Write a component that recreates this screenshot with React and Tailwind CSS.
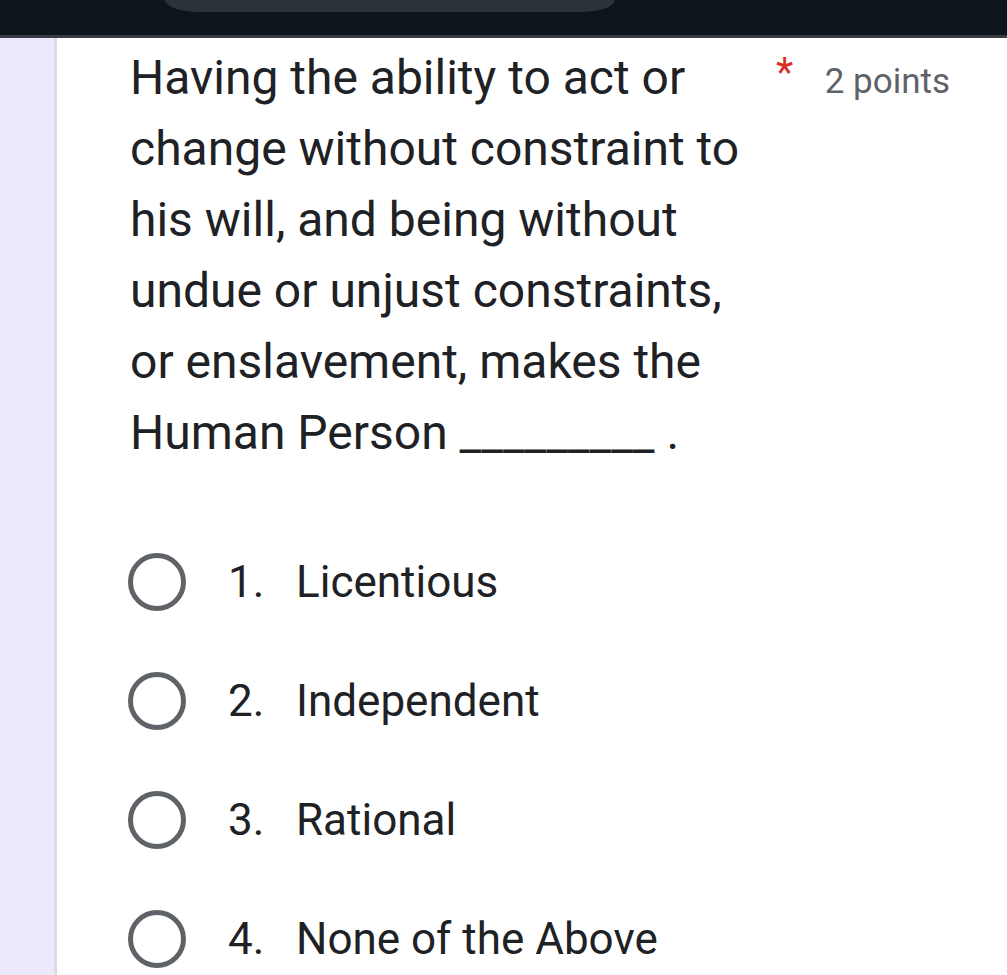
export default function App() {
    const options = ["Licentious", "Independent", "Rational", "None of the Above"]

    return (
        <div className="w-[1007px] h-[975px] overflow-hidden bg-white font-['Roboto',sans-serif]">
            <div className="h-[35px] bg-[#0b151b] pl-[165px]">
                <div className="w-[450px] h-[12px] bg-[#2b3338] rounded-bl-[34px_12px] rounded-br-[34px_12px]" />
            </div>
            <div className="h-[3px] bg-[#363c41]" />

            <div className="flex h-[937px]">
                <div className="w-[57px] shrink-0 bg-[#ece9fc] border-r-[3px] border-[#dcdbe5]" />

                <div className="flex-1 pl-[73px] pr-[57px] pt-[4px]">
                    <div className="flex items-start">
                        <div className="w-[620px] text-[48px] leading-[71px] text-[#202124]">
                            Having the ability to act or change without constraint to his will, and being without undue or unjust constraints, or enslavement, makes the Human Person _________ .
                        </div>
                        <span className="ml-[26px] mt-[11px] text-[40px] leading-[40px] text-[#d93025]">*</span>
                        <span className="ml-auto mt-[18px] text-[35px] leading-[44px] text-[#5f6368]">2 points</span>
                    </div>

                    <div className="mt-[54px]">
                        {options.map((opt, i) => (
                            <div key={opt} className="h-[119px] flex items-center">
                                <div className="w-[58px] h-[58px] -ml-[2px] rounded-full border-[5px] border-[#5f6368] shrink-0" />
                                <span className="ml-[42px] w-[68px] text-[44px] text-[#202124]">{i + 1}.</span>
                                <span className="text-[44px] text-[#202124]">{opt}</span>
                            </div>
                        ))}
                    </div>
                </div>
            </div>
        </div>
    )
}
